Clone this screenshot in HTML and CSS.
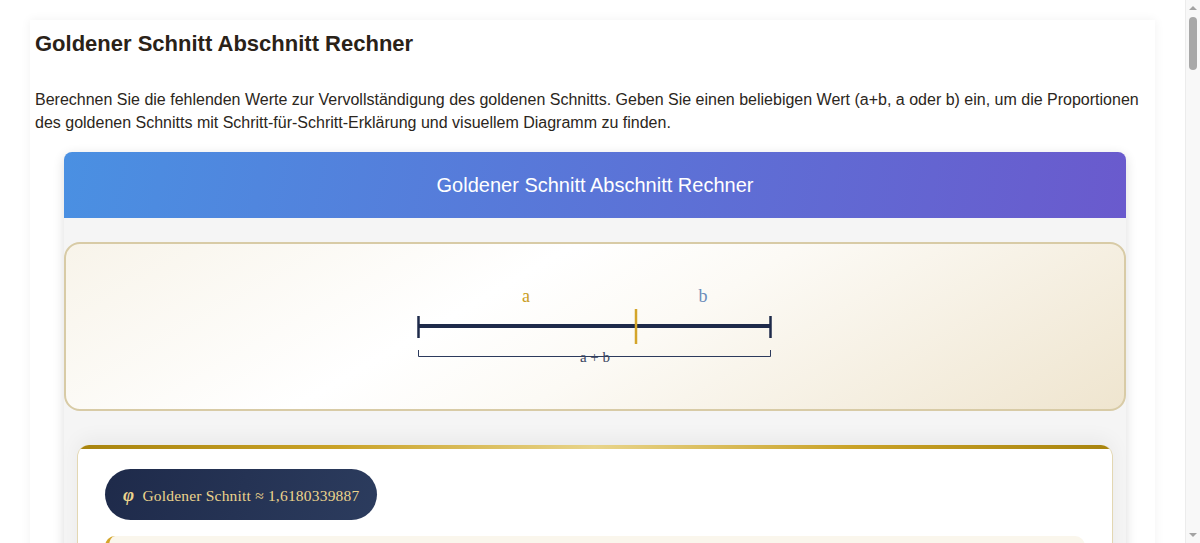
FILE: index.html
```html
<!DOCTYPE html>
<html lang="de">
<head>
    <meta charset="UTF-8">
    <meta name="viewport" content="width=device-width, initial-scale=1.0">
    <title>Goldener Schnitt Abschnitt Rechner</title>
    <link rel="stylesheet" href="styles.css">
</head>
<body>
    <div class="page">
        <h2>Goldener Schnitt Abschnitt Rechner</h2>
        <p class="intro">Berechnen Sie die fehlenden Werte zur Vervollständigung des goldenen Schnitts. Geben Sie einen beliebigen Wert (a+b, a oder b) ein, um die Proportionen des goldenen Schnitts mit Schritt-für-Schritt-Erklärung und visuellem Diagramm zu finden.</p>

        <div class="calculator">
            <div class="calc-header">Goldener Schnitt Abschnitt Rechner</div>
            <div class="calc-body">
                <div class="diagram">
                    <svg width="356" height="90" viewBox="0 0 356 90">
                        <text x="109" y="20" class="lbl-a" text-anchor="middle">a</text>
                        <text x="286" y="20" class="lbl-b" text-anchor="middle">b</text>
                        <line x1="1" y1="44" x2="354" y2="44" stroke="#1e2a4a" stroke-width="4"/>
                        <line x1="1.5" y1="34" x2="1.5" y2="56" stroke="#1e2a4a" stroke-width="2.5"/>
                        <line x1="353.5" y1="34" x2="353.5" y2="56" stroke="#1e2a4a" stroke-width="2.5"/>
                        <line x1="219" y1="27" x2="219" y2="62" stroke="#d4a52a" stroke-width="2.5"/>
                        <path d="M1.5 68 V74.5 H353.5 V68" fill="none" stroke="#2c3a5c" stroke-width="1"/>
                        <text x="178" y="80" class="lbl-sum" text-anchor="middle">a + b</text>
                    </svg>
                </div>

                <div class="result">
                    <div class="phi-pill"><span class="phi">φ</span> Goldener Schnitt ≈ 1,6180339887</div>
                    <div class="steps">
                        <p>Geben Sie einen Wert ein, um die Berechnung zu starten.</p>
                        <p>a = (a + b) ÷ φ</p>
                        <p>b = a ÷ φ</p>
                        <p>a + b = a × φ</p>
                    </div>
                </div>
            </div>
        </div>
    </div>

    <!-- browser scrollbar -->
    <div class="scrollbar" aria-hidden="true">
        <span class="arrow up"></span>
        <span class="thumb"></span>
        <span class="arrow down"></span>
    </div>
</body>
</html>
```

FILE: styles.css
```css
body {
    margin: 0 15px 0 0;
    background: #fff;
    font-family: 'Liberation Sans', Arial, sans-serif;
    color: #2b2620;
}
.page {
    max-width: 1115px;
    margin: 20px auto 40px auto;
    padding: 11px 5px 30px 5px;
    background: #fff;
    box-shadow: 0 0 10px rgba(0,0,0,0.06);
}
h2 {
    font-size: 22px;
    margin: 0 0 31px 0;
    color: #2a2218;
}
.intro {
    font-size: 16px;
    line-height: 23px;
    margin: 0 0 18px 0;
    color: #2b2620;
}
.calculator {
    margin: 0 24px 0 29px;
    border-radius: 8px;
    background: #f5f5f5;
    box-shadow: 0 3px 12px rgba(0,0,0,0.14);
}
.calc-header {
    background: linear-gradient(100deg, #4a90e2, #6a5acd);
    color: #fff;
    text-align: center;
    font-size: 20px;
    height: 66px;
    line-height: 66px;
    border-radius: 8px 8px 0 0;
}
.calc-body {
    padding: 24px 0 30px 0;
}
.diagram {
    height: 165px;
    border: 2px solid #d8cba6;
    border-radius: 16px;
    background: linear-gradient(150deg, #f8f4ea 0%, #fff 38%, #fcfaf5 55%, #efe5cf 100%);
    display: flex;
    align-items: center;
    justify-content: center;
}
.diagram svg {
    display: block;
    margin-top: 0;
    font-family: 'Liberation Serif', 'Times New Roman', serif;
}
.lbl-a {
    fill: #c99d22;
    font-size: 18px;
}
.lbl-b {
    fill: #6b8cba;
    font-size: 18px;
}
.lbl-sum {
    fill: #3a4560;
    font-size: 15px;
}
.result {
    margin: 34px 13px 0 13px;
    padding: 24px 27px 28px 27px;
    background: linear-gradient(90deg, #a8840e, #c9a227 25%, #e8d48a 50%, #c9a227 75%, #a8840e) top / 100% 4px no-repeat, #fff;
    border: 1px solid #e3d7b2;
    border-top-width: 0;
    border-radius: 12px;
    box-shadow: 0 -6px 20px rgba(0,0,0,0.05);
}
.phi-pill {
    display: inline-block;
    padding: 0 18px;
    height: 51px;
    line-height: 51px;
    border-radius: 26px;
    background: linear-gradient(110deg, #1e2a4a, #2c3c5e);
    color: #ecd48c;
    font-family: 'Liberation Serif', 'Times New Roman', serif;
    font-size: 15.5px;
    letter-spacing: 0.2px;
}
.phi {
    font-style: italic;
    font-weight: bold;
    font-size: 19px;
    margin-right: 4px;
}
.steps {
    margin-top: 16px;
    background: #faf6ec;
    border-left: 4px solid #d4a52a;
    border-radius: 10px;
    padding: 16px 20px;
    font-size: 15px;
    color: #333;
}
.steps p {
    margin: 0 0 10px 0;
}
.scrollbar {
    position: fixed;
    top: 0;
    right: 0;
    bottom: 0;
    width: 15px;
    background: #f8f8f8;
    border-left: 1px solid #ececec;
    box-sizing: border-box;
    display: flex;
    flex-direction: column;
    align-items: center;
}
.thumb {
    width: 8px;
    height: 53px;
    margin-top: 7px;
    border-radius: 4px;
    background: #a8a8a8;
}
.arrow {
    width: 0;
    height: 0;
    border-left: 4px solid transparent;
    border-right: 4px solid transparent;
}
.arrow.up {
    margin-top: 6px;
    border-bottom: 4px solid #a3a3a3;
}
.arrow.down {
    margin-top: auto;
    margin-bottom: 6px;
    border-top: 4px solid #a3a3a3;
}
```
